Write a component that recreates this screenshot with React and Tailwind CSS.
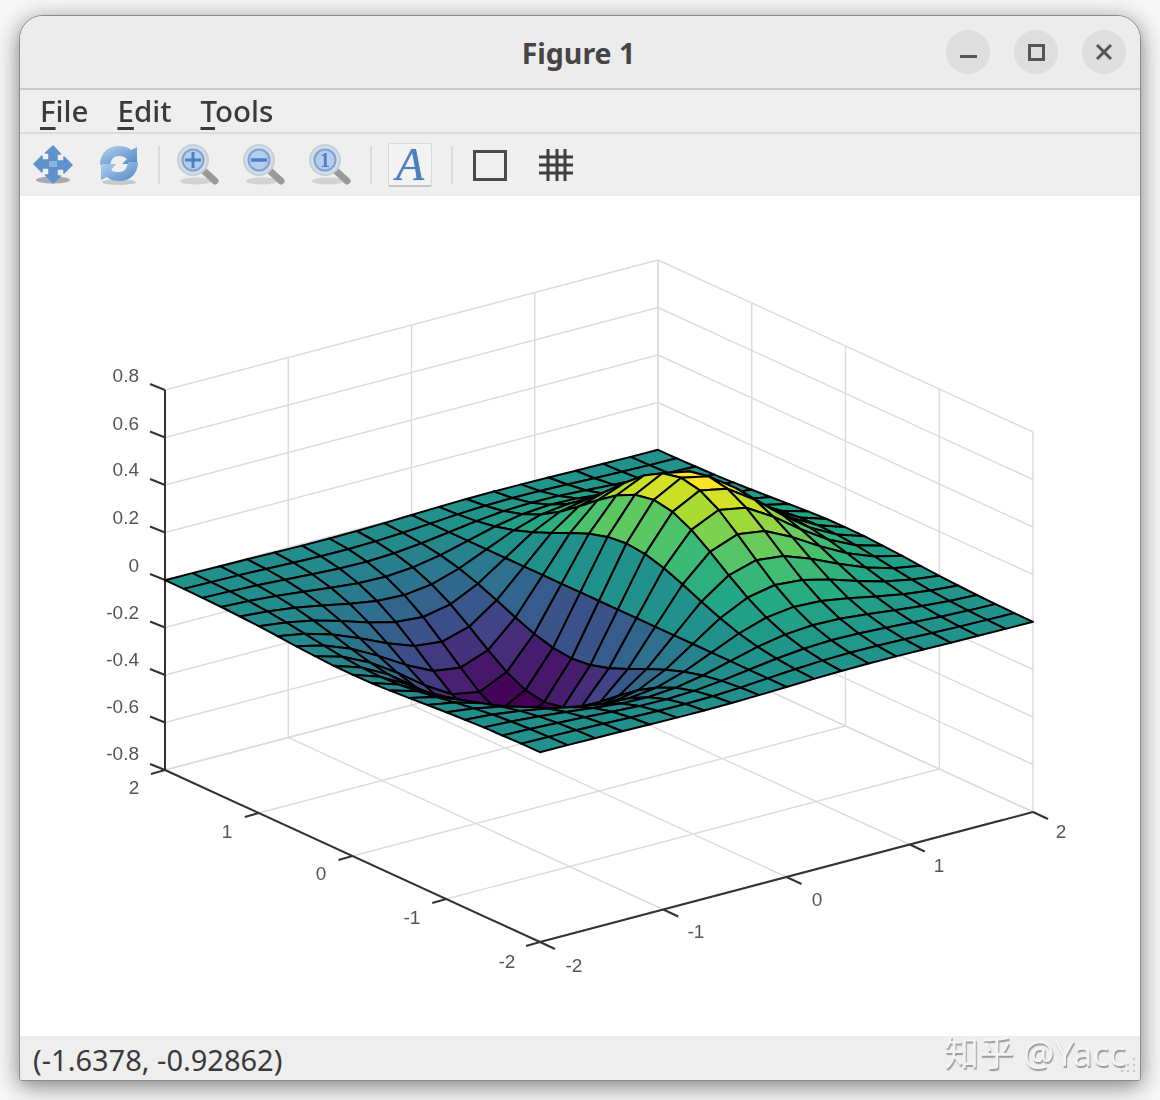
import React from "react";

// viridis stops
const VIRIDIS = [
  [68, 1, 84], [72, 36, 117], [65, 68, 135], [53, 95, 141], [42, 120, 142],
  [33, 145, 140], [34, 168, 132], [68, 191, 112], [122, 209, 81], [189, 223, 38], [253, 231, 37],
];

const viridis = (t) => {
  const p = Math.min(Math.max(t, 0), 1) * (VIRIDIS.length - 1);
  const i = Math.min(Math.floor(p), VIRIDIS.length - 2);
  const f = p - i;
  const c = VIRIDIS[i].map((v, k) => Math.round(v + (VIRIDIS[i + 1][k] - v) * f));
  return `rgb(${c[0]},${c[1]},${c[2]})`;
};

// axes projection, az -37.5 el 30 in page pixels
const project = (x, y, z) => [
  540 + ((x + 2) / 4) * 493 - ((y + 2) / 4) * 375,
  942 - ((x + 2) / 4) * 130 - ((y + 2) / 4) * 172 - (z + 0.8) * 237.5,
];
const pt = (x, y, z) => project(x, y, z).map((v) => v.toFixed(1)).join(",");

const peaks = (x, y) => x * Math.exp(-x * x - y * y);

const NX = 18;
const NY = 20;
const ZMAX = 0.42;

const buildFaces = () => {
  const faces = [];
  const atX = (i) => -2 + (i * 4) / NX;
  const atY = (j) => -2 + (j * 4) / NY;
  // back corner first, so that nearer faces paint over it
  for (let i = NX - 1; i >= 0; i--) {
    for (let j = NY - 1; j >= 0; j--) {
      const corners = [
        [atX(i), atY(j)], [atX(i + 1), atY(j)], [atX(i + 1), atY(j + 1)], [atX(i), atY(j + 1)],
      ];
      faces.push({
        key: `${i}-${j}`,
        points: corners.map(([x, y]) => pt(x, y, peaks(x, y))).join(" "),
        // flat shading takes the colour of the first vertex
        fill: viridis((peaks(corners[0][0], corners[0][1]) + ZMAX) / (2 * ZMAX)),
      });
    }
  }
  return faces;
};

const faces = buildFaces();

const ZTICKS = [0.8, 0.6, 0.4, 0.2, 0, -0.2, -0.4, -0.6, -0.8];
const XY = [-2, -1, 0, 1, 2];

const Seg = ({ a, b, className }) => (
  <line x1={a[0]} y1={a[1]} x2={b[0]} y2={b[1]} className={className} />
);

const Plot = () => {
  const grid = "stroke-[#dcdcdc] stroke-[1.4]";
  const dark = "stroke-[#333333] stroke-2";
  const label = "fill-[#555555] text-[19px] font-['Liberation_Sans',sans-serif]";
  return (
    <svg viewBox="20 196 1120 840" className="block w-[1120px] h-[840px]">
      {/* walls and floor */}
      {ZTICKS.map((z) => (
        <g key={z}>
          <Seg a={project(-2, 2, z)} b={project(2, 2, z)} className={grid} />
          <Seg a={project(2, 2, z)} b={project(2, -2, z)} className={grid} />
        </g>
      ))}
      {XY.map((v) => (
        <g key={v}>
          <Seg a={project(v, 2, -0.8)} b={project(v, 2, 0.8)} className={grid} />
          <Seg a={project(2, v, -0.8)} b={project(2, v, 0.8)} className={grid} />
          <Seg a={project(v, -2, -0.8)} b={project(v, 2, -0.8)} className={grid} />
          <Seg a={project(-2, v, -0.8)} b={project(2, v, -0.8)} className={grid} />
        </g>
      ))}

      {/* axes */}
      <Seg a={project(-2, 2, -0.8)} b={project(-2, 2, 0.8)} className={dark} />
      <Seg a={project(-2, 2, -0.8)} b={project(-2, -2, -0.8)} className={dark} />
      <Seg a={project(-2, -2, -0.8)} b={project(2, -2, -0.8)} className={dark} />
      {ZTICKS.map((z) => {
        const a = project(-2, 2, z);
        return <Seg key={z} a={a} b={[a[0] - 15, a[1] - 6]} className={dark} />;
      })}
      {XY.map((v) => {
        const a = project(v, -2, -0.8);
        const b = project(-2, v, -0.8);
        return (
          <g key={v}>
            <Seg a={a} b={[a[0] + 15, a[1] + 7]} className={dark} />
            <Seg a={b} b={[b[0] - 14, b[1] + 4]} className={dark} />
          </g>
        );
      })}

      {/* surface */}
      <g className="stroke-black stroke-2 [stroke-linejoin:round]">
        {faces.map((f) => (
          <polygon key={f.key} points={f.points} fill={f.fill} />
        ))}
      </g>

      {/* tick labels */}
      {ZTICKS.map((z, i) => (
        <text key={z} x={139} y={[382, 430, 476, 524, 572, 619, 666, 713, 760][i]} textAnchor="end" className={label}>
          {z === 0 ? "0" : z.toFixed(1)}
        </text>
      ))}
      {[["2", 134, 794], ["1", 227, 838], ["0", 321, 880], ["-1", 412, 924], ["-2", 507, 968]].map(([t, x, y]) => (
        <text key={t} x={x} y={y} textAnchor="middle" className={label}>{t}</text>
      ))}
      {[["-2", 574, 972], ["-1", 696, 938], ["0", 817, 906], ["1", 939, 872], ["2", 1061, 838]].map(([t, x, y]) => (
        <text key={t} x={x} y={y} textAnchor="middle" className={label}>{t}</text>
      ))}
    </svg>
  );
};

const MoveIcon = () => (
  <svg viewBox="0 0 44 44" className="w-11 h-11">
    <ellipse cx="22" cy="37" rx="17" ry="3.5" fill="#7c7c7c" opacity="0.6" />
    <path
      d="M22 3l7.5 8H26v7h7v-4l8 8-8 8v-4h-7v7h3.5L22 40l-7.5-8H18v-7h-7v4l-8-8 8-8v4h7v-7h-3.5z"
      fill="#5f92cd"
      stroke="#5f92cd"
      strokeWidth="1.5"
      strokeLinejoin="round"
    />
    <path d="M18 18h8v6h-8z" fill="#8db4de" />
  </svg>
);

const RefreshIcon = () => (
  <svg viewBox="0 0 44 44" className="w-11 h-11">
    <defs>
      <linearGradient id="refreshBlue" x1="0" y1="0" x2="1" y2="1">
        <stop offset="0" stopColor="#b4d3ee" />
        <stop offset="1" stopColor="#4f86c6" />
      </linearGradient>
    </defs>
    <ellipse cx="22" cy="39" rx="17" ry="3" fill="#999" opacity="0.45" />
    <path
      d="M3 22C3 10 11 3 22 3c5 0 9 1 12 4l6-3v17H25l5-5c-2-2-5-3-8-3-5 0-8 3-9 9z"
      fill="url(#refreshBlue)"
    />
    <path
      d="M41 19c0 12-8 19-19 19-5 0-9-1-12-4l-6 3V21h15l-5 6c2 2 5 2 8 2 5 0 8-3 9-10z"
      fill="url(#refreshBlue)"
    />
  </svg>
);

const ZoomIcon = ({ mark }) => (
  <svg viewBox="0 0 44 44" className="w-11 h-11">
    <ellipse cx="20" cy="38" rx="16" ry="3.5" fill="#aaa" opacity="0.4" />
    <path d="M27 27l12 11" stroke="#999999" strokeWidth="7" strokeLinecap="round" />
    <circle cx="17" cy="17" r="15" fill="#d4dde6" stroke="#c6ced6" strokeWidth="2" />
    <circle cx="17" cy="17" r="10.5" fill="#b3cdea" stroke="#7aa4d4" strokeWidth="2" />
    {mark === "plus" && <path d="M17 9v16M9 17h16" stroke="#4f80bb" strokeWidth="3" />}
    {mark === "minus" && <path d="M9 17h16" stroke="#4f80bb" strokeWidth="3.5" />}
    {mark === "one" && (
      <text x="17" y="24" textAnchor="middle" fill="#4f80bb" className="text-[20px] font-bold font-['Liberation_Serif',serif]">
        1
      </text>
    )}
  </svg>
);

const Sep = ({ ml }) => <div className={`w-[2px] h-[38px] bg-[#dcdcdc] ${ml}`} />;

const ToolButton = ({ children, ml = "" }) => (
  <div className={`w-[66px] h-full flex items-center justify-center ${ml}`}>{children}</div>
);

const Toolbar = () => (
  <div className="h-[62px] shrink-0 flex items-center bg-[#efefef]">
    <ToolButton><MoveIcon /></ToolButton>
    <ToolButton><RefreshIcon /></ToolButton>
    <Sep ml="ml-[6px]" />
    <ToolButton ml="ml-[5px]"><ZoomIcon mark="plus" /></ToolButton>
    <ToolButton><ZoomIcon mark="minus" /></ToolButton>
    <ToolButton><ZoomIcon mark="one" /></ToolButton>
    <Sep ml="ml-[7px]" />
    <div className="ml-[16px] w-[44px] h-[44px] flex items-center justify-center bg-[#f3f3f3] border border-[#dadada] border-b-2 border-b-[#c4c4c4] rounded-[2px]">
      <span className="text-[46px] leading-none italic font-medium text-[#4d7fbd] font-['Liberation_Serif',serif] [text-shadow:0_0_1px_#4d7fbd]">A</span>
    </div>
    <Sep ml="ml-[19px]" />
    <ToolButton ml="ml-[4px]">
      <div className="w-[34px] h-[31px] border-[3px] border-[#4a4a4a]" />
    </ToolButton>
    <ToolButton>
      <svg viewBox="0 0 34 32" className="w-[34px] h-8" stroke="#3e3e3e" strokeWidth="3">
        <path d="M9 0v32M18 0v32M26 0v32M0 8h34M0 16h34M0 24h34" />
      </svg>
    </ToolButton>
  </div>
);

const MenuItem = ({ first, rest, ml }) => (
  <span className={ml}>
    <span className="underline decoration-[3px] underline-offset-[5px] [text-decoration-skip-ink:none]">{first}</span>
    {rest}
  </span>
);

const WindowButton = ({ children }) => (
  <div className="w-11 h-11 rounded-full bg-[#dedede] flex items-center justify-center">{children}</div>
);

export default function App() {
  return (
    <div className="w-[1160px] h-[1100px] bg-[#f7f7f7] pt-[15px] pl-[19px] overflow-hidden">
      <div className="relative w-[1122px] h-[1066px] flex flex-col bg-[#eeeeee] border-[1.5px] border-[#8c8c8c] rounded-t-[24px] rounded-b-[3px] overflow-hidden shadow-[0_5px_22px_rgba(0,0,0,0.5)] [filter:blur(0.7px)] font-['Noto_Sans',sans-serif] text-[#3a3a3a]">
        {/* title bar */}
        <div className="relative h-[74px] shrink-0 flex items-center justify-center border-b-2 border-[#c9c9c9] bg-[#ececec]">
          <span className="text-[28.5px] font-bold text-[#454545] mr-[3px] mt-[3px]">Figure 1</span>
          <div className="absolute right-[14px] top-[14px] flex gap-6">
            <WindowButton>
              <div className="w-[17px] h-[3px] bg-[#555] mt-[9px]" />
            </WindowButton>
            <WindowButton>
              <div className="w-[17px] h-[17px] border-[3px] border-[#555]" />
            </WindowButton>
            <WindowButton>
              <svg viewBox="0 0 18 18" className="w-[18px] h-[18px]" stroke="#555" strokeWidth="3">
                <path d="M2 2l14 14M16 2L2 16" />
              </svg>
            </WindowButton>
          </div>
        </div>

        {/* menu */}
        <div className="h-[44px] shrink-0 flex items-center pl-[20px] text-[29.5px] font-medium leading-none border-b-2 border-[#dcdcdc]">
          <MenuItem first="F" rest="ile" />
          <MenuItem first="E" rest="dit" ml="ml-[29px]" />
          <MenuItem first="T" rest="ools" ml="ml-[29px]" />
        </div>

        <Toolbar />

        <div className="bg-white h-[840px] shrink-0 overflow-hidden">
          <Plot />
        </div>

        {/* status bar */}
        <div className="relative flex-1 flex items-center pl-[13px] pt-[3px] text-[29px] leading-none bg-[#eeeeee]">
          (-1.6378, -0.92862)
        </div>

        {/* resize grip */}
        <svg viewBox="0 0 20 20" className="absolute right-[3px] bottom-[3px] w-5 h-5" fill="#c9c9c9">
          {[[17, 2], [17, 8], [11, 8], [17, 14], [11, 14], [5, 14]].map(([x, y]) => (
            <circle key={`${x}-${y}`} cx={x} cy={y} r="1.3" />
          ))}
        </svg>

        {/* watermark */}
        <div className="absolute left-[924px] bottom-[10px] whitespace-nowrap text-[35px] leading-none text-[#f3f3f3] font-['Noto_Sans','Noto_Sans_CJK_SC',sans-serif] [text-shadow:1px_2px_1px_#9a9a9a]">
          <span className="font-['Noto_Sans_CJK_SC',sans-serif]">知乎</span> @Yacc
        </div>
      </div>
    </div>
  );
}
